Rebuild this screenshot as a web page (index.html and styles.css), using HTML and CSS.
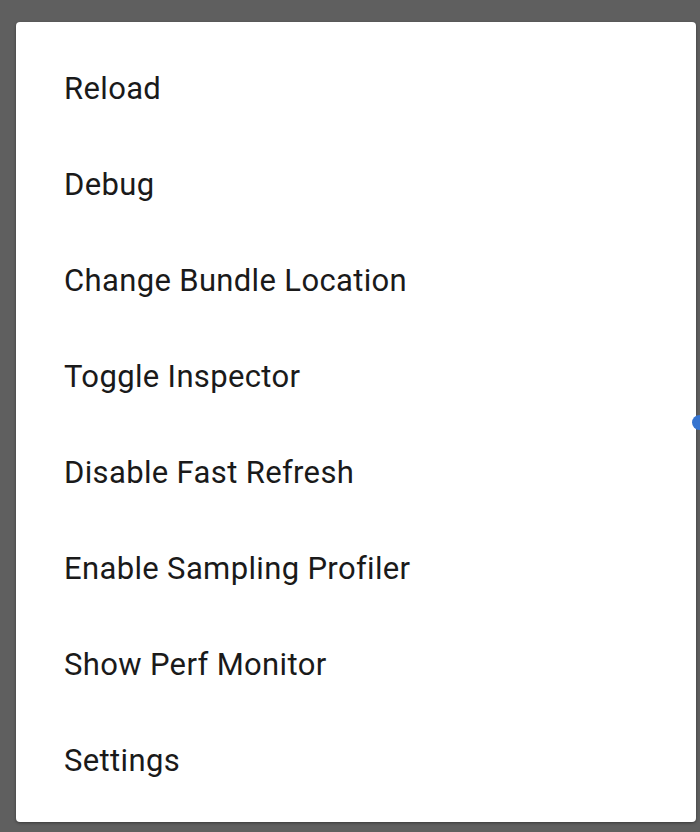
FILE: index.html
```html
<!DOCTYPE html>
<html lang="en">
<head>
    <meta charset="UTF-8">
    <meta name="viewport" content="width=device-width, initial-scale=1.0">
    <title>Dev Menu</title>
    <link rel="stylesheet" href="styles.css">
</head>
<body>
    <div class="dialog">
        <div class="item">Reload</div>
        <div class="item">Debug</div>
        <div class="item">Change Bundle Location</div>
        <div class="item">Toggle Inspector</div>
        <div class="item">Disable Fast Refresh</div>
        <div class="item">Enable Sampling Profiler</div>
        <div class="item">Show Perf Monitor</div>
        <div class="item">Settings</div>
    </div>
    <div class="dot"></div>
</body>
</html>
```

FILE: styles.css
```css
body {
    font-family: 'Roboto', sans-serif;
    background-color: #5f5f5f;
    margin: 0;
    padding: 22px 4px 0 16px;
    height: 832px;
    box-sizing: border-box;
    overflow: hidden;
    position: relative;
}

.dialog {
    background-color: #fff;
    border-radius: 4px;
    padding: 18px 0 14px;
    box-shadow: 0 1px 3px rgba(0, 0, 0, 0.4);
}

.item {
    height: 96px;
    display: flex;
    align-items: center;
    padding-left: 48px;
    font-size: 31px;
    letter-spacing: 0.35px;
    color: #1a1a1a;
}

.dot {
    position: absolute;
    left: 692px;
    top: 415px;
    width: 15px;
    height: 15px;
    border-radius: 50%;
    background-color: #3574d0;
}
```
